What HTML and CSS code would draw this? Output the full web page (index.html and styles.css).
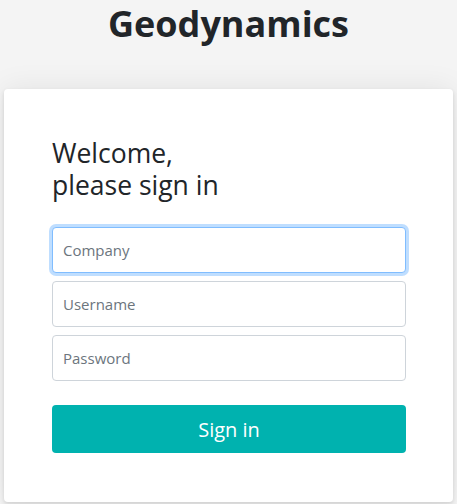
FILE: index.html
```html
<!DOCTYPE html>
<html lang="en">
<head>
<meta charset="utf-8">
<title>Geodynamics</title>
<link rel="stylesheet" href="styles.css">
</head>
<body>
<h1 class="brand">Geodynamics</h1>
<main class="card">
  <h2 class="welcome"><span class="welcome-line">Welcome,</span><span class="welcome-line">please sign in</span></h2>
  <form class="form">
    <input class="field field-focus" type="text" placeholder="Company">
    <input class="field" type="text" placeholder="Username">
    <input class="field" type="password" placeholder="Password">
    <button class="submit" type="button">Sign in</button>
  </form>
</main>
</body>
</html>
```
FILE: styles.css
```css
html, body {
  margin: 0;
  padding: 0;
}
body {
  background: #f4f4f4;
  font-family: "Open Sans", "Noto Sans", "Liberation Sans", sans-serif;
  color: #212529;
  padding: 0 4px;
  height: 504px;
  box-sizing: border-box;
  overflow: hidden;
}
.brand {
  margin: 0;
  text-align: center;
  font-size: 36px;
  font-weight: 700;
  line-height: 48px;
  color: #212529;
}
.card {
  margin-top: 41px;
  background: #fff;
  border-radius: 4px;
  box-shadow: 0 0 30px rgba(0, 0, 0, 0.08), 0 2px 4px rgba(0, 0, 0, 0.12);
  padding: 48px 47px 49px 48px;
}
.welcome {
  margin: 0 0 26px;
  font-size: 26.5px;
  font-weight: 400;
  line-height: 32px;
  display: flex;
  flex-direction: column;
}
.welcome-line {
  display: block;
}
.form {
  display: flex;
  flex-direction: column;
  gap: 8px;
}
.field {
  box-sizing: border-box;
  height: 46px;
  width: 100%;
  border: 1px solid #ced4da;
  border-radius: 4px;
  padding: 0 10px;
  font-family: inherit;
  font-size: 15px;
  color: #495057;
  background: #fff;
  outline: none;
}
.field::placeholder {
  color: #6c757d;
}
.field-focus {
  border-color: #80bdff;
  box-shadow: 0 0 0 3px rgba(0, 123, 255, 0.25);
}
.submit {
  margin-top: 16px;
  height: 48px;
  border: none;
  border-radius: 4px;
  background: #00b2af;
  color: #fff;
  font-family: inherit;
  font-size: 20px;
}
```
